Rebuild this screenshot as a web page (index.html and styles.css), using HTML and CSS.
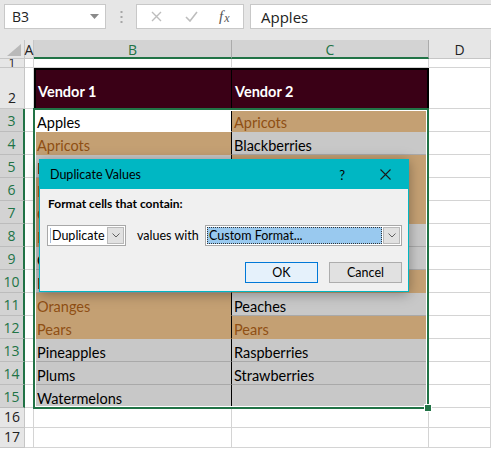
FILE: index.html
```html
<!DOCTYPE html>
<html>
<head>
<meta charset="utf-8">
<link rel="stylesheet" href="styles.css">
</head>
<body>
<div class="toolbar">
  <div class="namebox">
    <span>B3</span>
    <svg class="nb-arrow" width="9" height="5" viewBox="0 0 9 5"><path d="M0 0H9L4.5 5Z" fill="#8a8a8a"/></svg>
  </div>
  <div class="dots">
    <svg width="3" height="12" viewBox="0 0 3 12"><rect x="0.5" y="0" width="2" height="2" fill="#a6a6a6"/><rect x="0.5" y="5" width="2" height="2" fill="#a6a6a6"/><rect x="0.5" y="10" width="2" height="2" fill="#a6a6a6"/></svg>
  </div>
  <div class="fxbtns">
    <svg class="fb-x" width="11" height="11" viewBox="0 0 11 11"><path d="M1 1L10 10M10 1L1 10" stroke="#bdbdbd" stroke-width="1.4"/></svg>
    <svg class="fb-ok" width="13" height="11" viewBox="0 0 13 11"><path d="M1 6L5 10L12 1" stroke="#bdbdbd" stroke-width="1.6" fill="none"/></svg>
    <span class="fx">f<span class="fx-x">x</span></span>
  </div>
  <div class="formula">Apples</div>
</div>

<div class="sheet">
  <div class="grid">
    <div class="corner"><svg width="14" height="12" viewBox="0 0 14 12"><path d="M14 0V12H0Z" fill="#b9b9b9"/></svg></div>
    <div class="ch">A</div>
    <div class="ch sel">B</div>
    <div class="ch sel">C</div>
    <div class="ch">D</div>

    <div class="rh r1">1</div><div class="c"></div><div class="c"></div><div class="c"></div><div class="c"></div>
    <div class="rh">2</div><div class="c"></div><div class="c hd hdl">Vendor 1</div><div class="c hd hdr">Vendor 2</div><div class="c"></div>

    <div class="rh sel">3</div><div class="c"></div><div class="c b w">Apples</div><div class="c v t">Apricots</div><div class="c"></div>
    <div class="rh sel">4</div><div class="c"></div><div class="c b t">Apricots</div><div class="c v g">Blackberries</div><div class="c"></div>
    <div class="rh sel">5</div><div class="c"></div><div class="c b g">Bananas</div><div class="c v t">Cherries</div><div class="c"></div>
    <div class="rh sel">6</div><div class="c"></div><div class="c b t">Blueberries</div><div class="c v t">Figs</div><div class="c"></div>
    <div class="rh sel">7</div><div class="c"></div><div class="c b t">Cherries</div><div class="c v t">Blueberries</div><div class="c"></div>
    <div class="rh sel">8</div><div class="c"></div><div class="c b t">Figs</div><div class="c v g">Grapefruit</div><div class="c"></div>
    <div class="rh sel">9</div><div class="c"></div><div class="c b g">Grapes</div><div class="c v g">Lemons</div><div class="c"></div>
    <div class="rh sel">10</div><div class="c"></div><div class="c b g">Kiwis</div><div class="c v t">Mangoes</div><div class="c"></div>
    <div class="rh sel">11</div><div class="c"></div><div class="c b t">Oranges</div><div class="c v g">Peaches</div><div class="c"></div>
    <div class="rh sel">12</div><div class="c"></div><div class="c b t">Pears</div><div class="c v t">Pears</div><div class="c"></div>
    <div class="rh sel">13</div><div class="c"></div><div class="c b g">Pineapples</div><div class="c v g">Raspberries</div><div class="c"></div>
    <div class="rh sel">14</div><div class="c"></div><div class="c b g">Plums</div><div class="c v g">Strawberries</div><div class="c"></div>
    <div class="rh sel">15</div><div class="c"></div><div class="c b g last">Watermelons</div><div class="c v g last"></div><div class="c"></div>
    <div class="rh">16</div><div class="c"></div><div class="c"></div><div class="c"></div><div class="c"></div>
    <div class="rh">17</div><div class="c"></div><div class="c"></div><div class="c"></div><div class="c"></div>
  </div>

  <div class="selection"><div class="handle"></div></div>

  <div class="dialog">
    <div class="dlg-title">
      <span class="dlg-name">Duplicate Values</span>
      <span class="dlg-help">?</span>
      <svg class="dlg-close" width="11" height="11" viewBox="0 0 11 11"><path d="M0.5 0.5L10.5 10.5M10.5 0.5L0.5 10.5" stroke="#1a1a1a" stroke-width="1.1"/></svg>
    </div>
    <div class="dlg-body">
      <div class="dlg-label">Format cells that contain:</div>
      <div class="dlg-row">
        <div class="combo combo1">
          <span class="combo-text"><span class="caret"></span>Duplicate</span>
          <span class="combo-btn"><svg width="8" height="5" viewBox="0 0 8 5"><path d="M0.5 0.5L4 4L7.5 0.5" stroke="#606060" fill="none"/></svg></span>
        </div>
        <span class="dlg-mid">values with</span>
        <div class="combo combo2">
          <span class="combo-text sel-text">Custom Format...</span>
          <span class="combo-btn"><svg width="8" height="5" viewBox="0 0 8 5"><path d="M0.5 0.5L4 4L7.5 0.5" stroke="#606060" fill="none"/></svg></span>
        </div>
      </div>
      <div class="dlg-btns">
        <button class="btn btn-ok">OK</button>
        <button class="btn">Cancel</button>
      </div>
    </div>
  </div>
</div>
</body>
</html>
```

FILE: styles.css
```css
html, body {
  margin: 0;
  padding: 0;
}
body {
  width: 491px;
  height: 450px;
  overflow: hidden;
  background: #fff;
  font-family: "Lato", "Liberation Sans", sans-serif;
}

/* formula bar */
.toolbar {
  height: 40px;
  box-sizing: border-box;
  background: #e6e6e6;
  display: flex;
  align-items: flex-start;
  padding-top: 4px;
}
.namebox {
  margin-left: 4px;
  width: 102px;
  height: 25px;
  box-sizing: border-box;
  background: #fff;
  border: 1px solid #c8c8c8;
  display: flex;
  align-items: center;
  padding-left: 7px;
  padding-right: 6px;
  font: 14px "Open Sans", sans-serif;
  color: #222;
}
.nb-arrow {
  margin-left: auto;
}
.dots {
  width: 30px;
  height: 25px;
  display: flex;
  align-items: center;
  justify-content: center;
}
.fxbtns {
  width: 108px;
  height: 25px;
  box-sizing: border-box;
  background: #fff;
  border: 1px solid #c8c8c8;
  display: flex;
  align-items: center;
  padding-left: 14px;
}
.fb-ok {
  margin-left: 23px;
}
.fx {
  margin-left: 21px;
  font: italic 15px "Liberation Serif", serif;
  color: #555;
  display: flex;
  align-items: baseline;
}
.fx-x {
  font-size: 12px;
  position: relative;
  top: 1px;
  margin-left: 1px;
}
.formula {
  margin-left: 6px;
  flex: 1;
  height: 25px;
  box-sizing: border-box;
  background: #fff;
  border: 1px solid #c8c8c8;
  border-right: none;
  display: flex;
  align-items: center;
  padding-left: 10px;
  font: 15px "Open Sans", sans-serif;
  color: #222;
}

/* sheet */
.sheet {
  position: relative;
}
.grid {
  display: grid;
  grid-template-columns: 25px 9px 198px 197px 62px;
  grid-template-rows: 19px 9px 41px repeat(13, 23px) 20px 20px;
}
.grid > div {
  box-sizing: border-box;
}
.corner {
  background: #e6e6e6;
  border-right: 1px solid #c6c6c6;
  border-bottom: 1px solid #c6c6c6;
  display: flex;
  align-items: flex-end;
  justify-content: flex-end;
  padding: 0 3px 2px 0;
}
.ch {
  background: #e6e6e6;
  border-right: 1px solid #c6c6c6;
  border-bottom: 1px solid #c6c6c6;
  display: flex;
  align-items: center;
  justify-content: center;
  font: 14px "Open Sans", sans-serif;
  color: #222;
  padding-top: 1px;
}
.ch.sel {
  background: #d3d3d3;
  color: #217346;
  border-bottom: 2px solid #217346;
  border-right-color: #ababab;
}
.rh {
  background: #e6e6e6;
  border-right: 1px solid #c6c6c6;
  border-bottom: 1px solid #c6c6c6;
  display: flex;
  align-items: flex-end;
  justify-content: center;
  font: 14px "Open Sans", sans-serif;
  color: #222;
  line-height: 20px;
  overflow: hidden;
}
.rh.r1 {
  line-height: 8px;
  font-size: 12px;
  align-items: flex-start;
}
.rh.sel {
  background: #d3d3d3;
  color: #217346;
  border-right: 2px solid #217346;
  border-bottom-color: #bcbcbc;
}
.c {
  border-right: 1px solid #d4d4d4;
  border-bottom: 1px solid #d4d4d4;
  font-size: 14.5px;
  color: #000;
  padding-left: 3px;
  display: flex;
  align-items: flex-end;
  white-space: nowrap;
  overflow: hidden;
}
.v {
  padding-left: 2px;
}
.hd {
  background: #3a0016;
  color: #fff;
  font-weight: bold;
  align-items: center;
  padding-top: 4px;
  border-top: 2px solid #000;
  border-bottom: 1px solid #fff;
}
.hdl {
  border-left: 2px solid #000;
  border-right: 1px solid #000;
  padding-left: 2px;
}
.hdr {
  border-right: 2px solid #000;
}
.b {
  border-right: 1px solid #000;
}
.w {
  background: #fff;
  border-bottom-color: #fff;
}
.t {
  background: #c4a073;
  color: #8f4f14;
  border-bottom-color: #c4a073;
}
.g {
  background: #c8c8c8;
  border-bottom-color: #a9a9a9;
}
.b.t, .b.g, .b.w {
  border-right-color: #000;
}
.last {
  border-bottom-color: #c8c8c8;
}

/* selection overlay */
.selection {
  position: absolute;
  left: 33px;
  top: 68px;
  width: 396px;
  height: 301px;
  box-sizing: border-box;
  border: 2px solid #217346;
  box-shadow: inset 0 0 0 1px #fff;
  pointer-events: none;
}
.handle {
  position: absolute;
  right: -5px;
  bottom: -5px;
  width: 6px;
  height: 6px;
  background: #217346;
  border: 1px solid #fff;
}

/* dialog */
.dialog {
  position: absolute;
  left: 39px;
  top: 119px;
  width: 370px;
  height: 133px;
  box-sizing: border-box;
  border: 1px solid #00b7c3;
  background: #f0f0f0;
  box-shadow: 0 2px 12px rgba(0, 0, 0, 0.35);
  font-family: "Lato", "Noto Sans", sans-serif;
  font-size: 12px;
  color: #000;
  display: flex;
  flex-direction: column;
}
.dlg-title {
  height: 29px;
  background: #00b7c3;
  display: flex;
  align-items: center;
  padding-left: 10px;
}
.dlg-name {
  font-size: 12.5px;
  flex: 1;
}
.dlg-help {
  font-size: 13px;
  margin-right: 35px;
}
.dlg-close {
  margin-right: 17px;
}
.dlg-body {
  padding: 7px 6px 0 7px;
  display: flex;
  flex-direction: column;
}
.dlg-label {
  font-weight: bold;
  font-size: 12px;
  height: 16px;
  line-height: 16px;
  padding-left: 1px;
}
.dlg-row {
  margin-top: 13px;
  display: flex;
  align-items: center;
  height: 21px;
}
.combo {
  height: 21px;
  box-sizing: border-box;
  border: 1px solid #a8a8a8;
  background: #fff;
  display: flex;
  align-items: stretch;
  padding: 1px;
}
.combo1 {
  width: 79px;
}
.combo2 {
  width: 197px;
}
.combo-text {
  flex: 1;
  display: flex;
  align-items: center;
  font-size: 12.5px;
  padding-left: 3px;
  white-space: nowrap;
  overflow: hidden;
}
.caret {
  width: 1px;
  height: 15px;
  background: #a0b8d8;
  margin-right: 1px;
  margin-left: -2px;
}
.sel-text {
  background: #99c9ef;
  outline: 1px dotted #333;
  outline-offset: -1px;
  padding-left: 2px;
}
.combo-btn {
  width: 17px;
  margin-left: 1px;
  box-sizing: border-box;
  background: #e1e1e1;
  border: 1px solid #b9b9b9;
  display: flex;
  align-items: center;
  justify-content: center;
}
.dlg-mid {
  width: 79px;
  box-sizing: border-box;
  padding-left: 11px;
  font-size: 12.5px;
  white-space: nowrap;
}
.dlg-btns {
  margin-top: 16px;
  display: flex;
  justify-content: flex-end;
  gap: 11px;
}
.btn {
  width: 73px;
  height: 21px;
  box-sizing: border-box;
  border: 1px solid #adadad;
  background: #e1e1e1;
  font-family: "Lato", "Noto Sans", sans-serif;
  font-size: 12.5px;
  color: #000;
  padding: 0;
  margin: 0;
}
.btn-ok {
  border-color: #0078d7;
  background: #e5f1fb;
}
```
